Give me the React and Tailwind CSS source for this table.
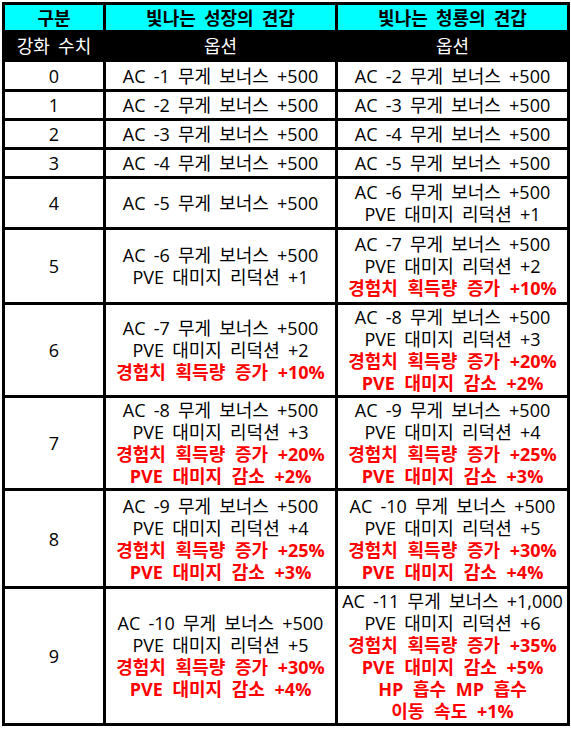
const 성장 = [
  ["AC -1 무게 보너스 +500"],
  ["AC -2 무게 보너스 +500"],
  ["AC -3 무게 보너스 +500"],
  ["AC -4 무게 보너스 +500"],
  ["AC -5 무게 보너스 +500"],
  ["AC -6 무게 보너스 +500", "PVE 대미지 리덕션 +1"],
  ["AC -7 무게 보너스 +500", "PVE 대미지 리덕션 +2", "!경험치 획득량 증가 +10%"],
  ["AC -8 무게 보너스 +500", "PVE 대미지 리덕션 +3", "!경험치 획득량 증가 +20%", "!PVE 대미지 감소 +2%"],
  ["AC -9 무게 보너스 +500", "PVE 대미지 리덕션 +4", "!경험치 획득량 증가 +25%", "!PVE 대미지 감소 +3%"],
  ["AC -10 무게 보너스 +500", "PVE 대미지 리덕션 +5", "!경험치 획득량 증가 +30%", "!PVE 대미지 감소 +4%"],
];

const 청룡 = [
  ["AC -2 무게 보너스 +500"],
  ["AC -3 무게 보너스 +500"],
  ["AC -4 무게 보너스 +500"],
  ["AC -5 무게 보너스 +500"],
  ["AC -6 무게 보너스 +500", "PVE 대미지 리덕션 +1"],
  ["AC -7 무게 보너스 +500", "PVE 대미지 리덕션 +2", "!경험치 획득량 증가 +10%"],
  ["AC -8 무게 보너스 +500", "PVE 대미지 리덕션 +3", "!경험치 획득량 증가 +20%", "!PVE 대미지 감소 +2%"],
  ["AC -9 무게 보너스 +500", "PVE 대미지 리덕션 +4", "!경험치 획득량 증가 +25%", "!PVE 대미지 감소 +3%"],
  ["AC -10 무게 보너스 +500", "PVE 대미지 리덕션 +5", "!경험치 획득량 증가 +30%", "!PVE 대미지 감소 +4%"],
  [
    "AC -11 무게 보너스 +1,000",
    "PVE 대미지 리덕션 +6",
    "!경험치 획득량 증가 +35%",
    "!PVE 대미지 감소 +5%",
    "!HP 흡수 MP 흡수",
    "!이동 속도 +1%",
  ],
];

const 셀 = "flex flex-col items-center justify-center text-center whitespace-nowrap";

// "!"로 시작하는 줄은 빨간 굵은 글씨
const 옵션셀 = ({ 줄들 }) => (
  <div className={`${셀} bg-white`}>
    {줄들.map((줄) =>
      줄.startsWith("!") ? (
        <span key={줄} className="font-bold [word-spacing:5px] text-[#ff0000]">
          {줄.slice(1)}
        </span>
      ) : (
        <span key={줄}>{줄}</span>
      )
    )}
  </div>
);

export default function App() {
  return (
    <div className="min-h-[729px] bg-white pl-[2px] pt-[2px]">
      <div
        className="grid w-[568px] grid-cols-[98px_229px_229px] grid-rows-[25px_26px_27px_26px_26px_26px_48px_72px_90px_90px_95px_134px] gap-[3px] bg-black p-[3px] text-[18px] leading-[22px] [word-spacing:3.5px] text-black"
        style={{ fontFamily: '"Open Sans", "Noto Sans CJK KR", sans-serif' }}
      >
        <div className={`${셀} bg-[#00ffff] font-bold`}>구분</div>
        <div className={`${셀} bg-[#00ffff] font-bold`}>빛나는 성장의 견갑</div>
        <div className={`${셀} bg-[#00ffff] font-bold`}>빛나는 청룡의 견갑</div>

        <div className={`${셀} text-white`}>강화 수치</div>
        <div className={`${셀} text-white`}>옵션</div>
        <div className={`${셀} text-white`}>옵션</div>

        {성장.map((줄들, 단계) => (
          <div key={단계} className="contents">
            <div className={`${셀} bg-white`}>{단계}</div>
            <옵션셀 줄들={줄들} />
            <옵션셀 줄들={청룡[단계]} />
          </div>
        ))}
      </div>
    </div>
  );
}
